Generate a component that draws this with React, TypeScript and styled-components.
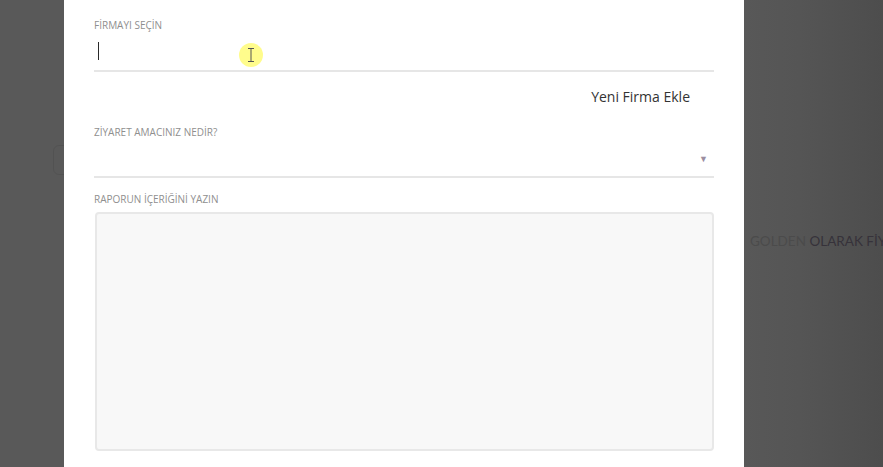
import styled, { createGlobalStyle } from 'styled-components';

const GlobalStyle = createGlobalStyle`
  html, body {
    margin: 0;
    padding: 0;
    height: 100%;
    overflow: hidden;
    background: #585858;
    font-family: "Open Sans", "Liberation Sans", sans-serif;
  }
`;

const Screen = styled.div`
  display: grid;
  grid-template-columns: 64px 680px 1fr;
  height: 467px;
  overflow: hidden;
`;

const LeftShade = styled.div`
  background: #595959;
  overflow: hidden;
  padding: 145px 0 0 53px;
`;

const GhostButton = styled.div`
  width: 30px;
  height: 30px;
  border: 1px solid rgba(0, 0, 0, 0.07);
  border-radius: 6px;
  box-sizing: border-box;
`;

const RightShade = styled.div`
  background: linear-gradient(to right, #585858 0%, #555555 40%, #4d4d4d 100%);
  overflow: hidden;
  padding: 232px 0 0 6px;
  white-space: nowrap;
  font-family: Lato, "Open Sans", sans-serif;
  font-size: 13.5px;
  line-height: 18px;
  font-weight: 400;
`;

const Faded = styled.span<{ $dim?: boolean }>`
  color: ${p => (p.$dim ? '#4b4b4b' : '#36323a')};
`;

const Modal = styled.div`
  background: #ffffff;
  padding: 18px 30px 0;
  overflow: hidden;
`;

const Label = styled.div`
  font-size: 10px;
  line-height: 14px;
  color: #8f8f8f;
  text-transform: uppercase;
`;

const InputLine = styled.div`
  position: relative;
  height: 38px;
  border-bottom: 2px solid #e6e6e6;
  display: flex;
  align-items: center;
  padding-left: 4px;
`;

const Caret = styled.span`
  display: block;
  width: 1px;
  height: 18px;
  background: #2a2a2a;
`;

const CursorHalo = styled.div`
  position: absolute;
  left: 145px;
  top: 11px;
  width: 24px;
  height: 24px;
  border-radius: 50%;
  background: rgba(255, 252, 120, 0.85);
  display: flex;
  align-items: center;
  justify-content: center;
`;

const AddRow = styled.div`
  display: flex;
  justify-content: flex-end;
  padding-right: 24px;
  margin-top: 14px;
  font-size: 14px;
  line-height: 22px;
  font-weight: 500;
  color: #333333;
`;

const FieldGap = styled.div<{ $h: number }>`
  height: ${p => p.$h}px;
`;

const SelectLine = styled.div`
  height: 39px;
  border-bottom: 2px solid #e6e6e6;
  display: flex;
  align-items: center;
  justify-content: flex-end;
  padding: 2px 6px 0 0;
  box-sizing: border-box;
  font-size: 9px;
  color: #9b8ea0;
`;

const TextBox = styled.div`
  margin-top: 6px;
  margin-left: 1px;
  height: 239px;
  background: #f8f8f8;
  border: 2px solid #e8e8e8;
  border-radius: 4px;
  box-sizing: border-box;
`;

const Hint = styled.div`
  margin-top: 16px;
  padding-left: 115px;
  font-size: 12px;
  line-height: 16px;
  color: #9a9a9a;
  white-space: nowrap;
`;

export default function App() {
  return (
    <>
      <GlobalStyle />
      <Screen>
        <LeftShade>
          <GhostButton />
        </LeftShade>
        <Modal>
          <Label>Fİrmayı seçİn</Label>
          <InputLine>
            <Caret />
            <CursorHalo>
              <svg width="8" height="14" viewBox="0 0 8 14">
                <path d="M1 0.5h6M4 0.5v13M1 13.5h6" stroke="#555" strokeWidth="1" fill="none" />
              </svg>
            </CursorHalo>
          </InputLine>
          <AddRow>Yeni Firma Ekle</AddRow>
          <FieldGap $h={17} />
          <Label>Zİyaret amacınız nedİr?</Label>
          <SelectLine>▼</SelectLine>
          <FieldGap $h={14} />
          <Label>Raporun İçerİğİnİ yazın</Label>
          <TextBox />
          <Hint>Ziyaret raporunuz yöneticinize iletilecektir.</Hint>
        </Modal>
        <RightShade>
          <Faded $dim>GOLDEN </Faded>
          <Faded>OLARAK FİYAT</Faded>
        </RightShade>
      </Screen>
    </>
  );
}
